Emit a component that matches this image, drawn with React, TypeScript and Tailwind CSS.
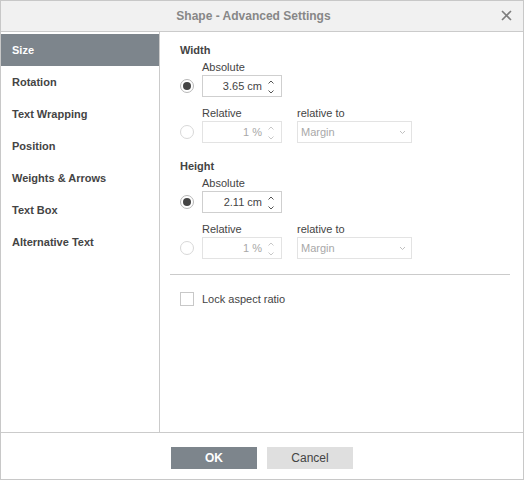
const font = "font-['Liberation_Sans',Arial,sans-serif]";

const tabs = [
  "Size",
  "Rotation",
  "Text Wrapping",
  "Position",
  "Weights & Arrows",
  "Text Box",
  "Alternative Text",
];

function Radio({ checked }: { checked?: boolean }) {
  return (
    <div className="flex w-[22px] shrink-0 items-center">
      <div
        className={
          "flex h-[14px] w-[14px] items-center justify-center rounded-full border " +
          (checked ? "border-[#b8b8b8]" : "border-[#d8d8d8]")
        }
      >
        {checked && <div className="h-[8px] w-[8px] rounded-full bg-[#444]" />}
      </div>
    </div>
  );
}

function Spinner({ disabled }: { disabled?: boolean }) {
  const c = disabled ? "#c8c8c8" : "#555";
  return (
    <svg width="8" height="16" viewBox="0 0 8 16" className="absolute right-[6px] top-[3px]">
      <path d="M1.5 4.5 L4 2 L6.5 4.5" fill="none" stroke={c} strokeWidth="1" />
      <path d="M1.5 11.5 L4 14 L6.5 11.5" fill="none" stroke={c} strokeWidth="1" />
    </svg>
  );
}

function NumInput({ value, disabled }: { value: string; disabled?: boolean }) {
  return (
    <div
      className={
        "relative flex h-[22px] w-[80px] items-center justify-end border pr-[19px] text-[11px] " +
        (disabled ? "border-[#e3e3e3] text-[#a8a8a8]" : "border-[#cfcfcf] text-[#444]")
      }
    >
      {value}
      <Spinner disabled={disabled} />
    </div>
  );
}

function Select() {
  return (
    <div className="flex h-[22px] w-[115px] items-center justify-between border border-[#e3e3e3] pl-[3px] pr-[5px] text-[11px] text-[#a8a8a8]">
      <span>Margin</span>
      <svg width="7" height="5" viewBox="0 0 7 5">
        <path d="M1 1 L3.5 3.5 L6 1" fill="none" stroke="#c0c0c0" strokeWidth="1" />
      </svg>
    </div>
  );
}

function SizeGroup({ title, value, first }: { title: string; value: string; first?: boolean }) {
  return (
    <div className={first ? "" : "mt-[16px]"}>
      <div className="h-[14px] font-bold leading-[14px] text-[#444]">{title}</div>
      <div className="mt-[3px] h-[14px] pl-[22px] leading-[14px] text-[#444]">Absolute</div>
      <div className="mt-[1px] flex">
        <Radio checked />
        <NumInput value={value} />
      </div>
      <div className="mt-[9px] flex h-[14px] pl-[22px] leading-[14px] text-[#444]">
        <span className="w-[95px]">Relative</span>
        <span>relative to</span>
      </div>
      <div className="mt-[1px] flex">
        <Radio />
        <NumInput value="1 %" disabled />
        <div className="ml-[15px]">
          <Select />
        </div>
      </div>
    </div>
  );
}

export default function App() {
  return (
    <div className={`${font} flex h-[480px] w-[524px] flex-col border border-[#c8c8c8] bg-white text-[11px]`}>
      <div className="relative flex h-[31px] shrink-0 items-center justify-center border-b border-[#cbcbcb] bg-[#f1f1f1] pr-[17px]">
        <span className="text-[12px] font-bold text-[#878787]">Shape - Advanced Settings</span>
        <svg width="11" height="11" viewBox="0 0 11 11" className="absolute right-[11px] top-[9px]">
          <path d="M1 1 L10 10 M10 1 L1 10" stroke="#7d7d7d" strokeWidth="1.6" />
        </svg>
      </div>

      <div className="flex min-h-0 flex-1">
        <div className="w-[159px] shrink-0 border-r border-[#cbcbcb] pt-[2px]">
          {tabs.map((t, i) => (
            <div
              key={t}
              className={
                "flex h-[32px] items-center pl-[11px] font-bold " +
                (i === 0 ? "bg-[#7d858c] text-white" : "text-[#444]")
              }
            >
              {t}
            </div>
          ))}
        </div>

        <div className="flex-1 pl-[20px] pr-[13px] pt-[11px]">
          <SizeGroup title="Width" value="3.65 cm" first />
          <SizeGroup title="Height" value="2.11 cm" />
          <div className="-ml-[10px] mt-[15px] h-px bg-[#cbcbcb]" />
          <div className="mt-[16px] flex items-center">
            <div className="w-[22px]">
              <div className="h-[14px] w-[14px] border border-[#c8c8c8]" />
            </div>
            <span className="text-[#444]">Lock aspect ratio</span>
          </div>
        </div>
      </div>

      <div className="flex h-[47px] shrink-0 justify-center gap-[10px] border-t border-[#cbcbcb] pt-[14px]">
        <button className="h-[22px] w-[86px] bg-[#7d858c] text-[12px] font-bold text-white">OK</button>
        <button className="h-[22px] w-[86px] bg-[#dfdfdf] text-[12px] text-[#444]">Cancel</button>
      </div>
    </div>
  );
}
